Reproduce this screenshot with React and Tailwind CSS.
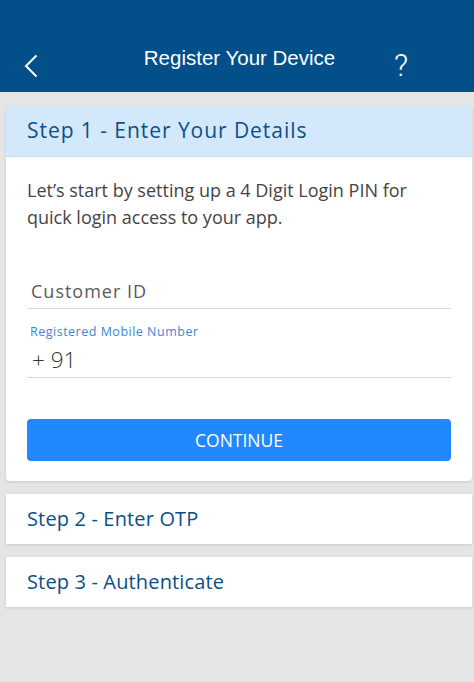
const steps = ["Step 2 - Enter OTP", "Step 3 - Authenticate"];

const App = () => {
  return (
    <div className="min-h-[682px] bg-[#e5e5e5] font-['Open_Sans',sans-serif]">
      {/* Header */}
      <div className="h-[92px] bg-[#034f8a] text-white flex items-center pt-[32px] pl-[24px] pr-[62px]">
        <svg width="14" height="24" viewBox="0 0 14 24" className="shrink-0 mt-[8px]">
          <polyline points="12.5,1.5 2,12 12.5,22.5" fill="none" stroke="white" strokeWidth="2" />
        </svg>
        <h1 className="flex-1 text-center text-[20.5px] font-['Liberation_Sans',sans-serif] pb-[8px] pl-[51px]">
          Register Your Device
        </h1>
        <span className="w-[22px] text-center text-[31px] font-light font-['Roboto',sans-serif] leading-none mt-[6px]">
          ?
        </span>
      </div>

      {/* Step 1 card */}
      <div className="ml-[6px] mr-[2px] mt-[14px] bg-white rounded-b-[4px] shadow-[0_1px_3px_rgba(0,0,0,0.12)] overflow-hidden">
        <div className="h-[51px] flex items-center px-[21px] bg-[#d4e8fb] border-b border-[#c9dcee]">
          <h2 className="text-[21px] text-[#0c4f86] tracking-[0.95px]">Step 1 - Enter Your Details</h2>
        </div>
        <div className="px-[21px] pt-[20px] pb-[20px]">
          <p className="max-w-[412px] text-[18px] leading-[27px] text-[#444]">
            Let’s start by setting up a 4 Digit Login PIN for quick login access to your app.
          </p>

          <div className="mt-[43px] h-[35px] border-b border-[#d9d9d9] flex items-center pl-[4px]">
            <span className="text-[18px] tracking-[1px] text-[#5a5a5a]">Customer ID</span>
          </div>

          <div className="mt-[15px] pl-[3px] h-[16px] text-[12.5px] leading-[16px] tracking-[0.5px] text-[#3b86d8]">
            Registered Mobile Number
          </div>
          <div className="mt-[5px] h-[33px] border-b border-[#d9d9d9] flex items-start pl-[5px]">
            <span className="text-[22.5px] leading-[30px] font-light text-[#333]">+ 91</span>
          </div>

          <button className="mt-[41px] w-full h-[42px] rounded-[4px] bg-[#2288ff] text-white text-[17.5px]">
            CONTINUE
          </button>
        </div>
      </div>

      {/* Remaining steps */}
      <div className="flex flex-col gap-[13px] mt-[13px] ml-[6px] mr-[2px]">
        {steps.map((s) => (
          <div
            key={s}
            className="h-[50px] flex items-center px-[21px] bg-white shadow-[0_1px_3px_rgba(0,0,0,0.12)]"
          >
            <span className="text-[20px] text-[#0c4f86] tracking-[0.15px]">{s}</span>
          </div>
        ))}
      </div>
    </div>
  );
};

export default App;
